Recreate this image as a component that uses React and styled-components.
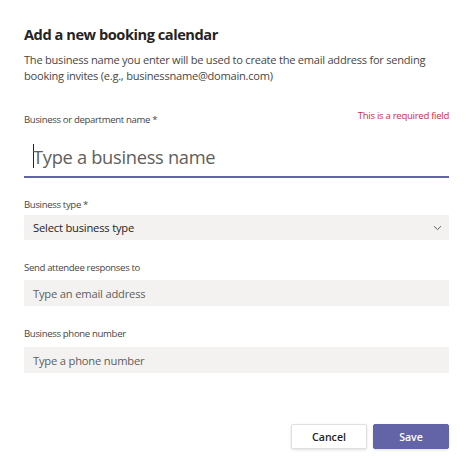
import React from 'react'
import styled, { createGlobalStyle } from 'styled-components'

const GlobalStyle = createGlobalStyle`
  html, body {
    margin: 0;
    padding: 0;
    background: #ffffff;
  }
  body {
    font-family: "Open Sans", "Noto Sans", sans-serif;
    color: #252423;
  }
`

const Dialog = styled.div`
  width: 474px;
  height: 475px;
  box-sizing: border-box;
  padding: 24px 25px 0 24px;
  display: flex;
  flex-direction: column;
`

const Title = styled.h1`
  margin: 0;
  font-size: 14.6px;
  line-height: 20px;
  font-weight: 700;
  color: #252423;
  letter-spacing: -0.45px;
`

const Description = styled.p`
  margin: 8px 0 0;
  font-size: 11.1px;
  line-height: 16px;
  color: #484644;
  letter-spacing: -0.25px;
`

const Field = styled.div`
  display: flex;
  flex-direction: column;
  margin-top: ${props => props.gap || 0}px;
`

const LabelRow = styled.div`
  display: flex;
  justify-content: space-between;
  align-items: flex-end;
  height: 14px;
`

const Label = styled.label`
  font-size: 9.6px;
  line-height: 14px;
  color: #484644;
  letter-spacing: -0.35px;
`

const ErrorText = styled.span`
  font-size: 9.6px;
  line-height: 14px;
  color: #c4314b;
  letter-spacing: -0.3px;
  position: relative;
  top: -4px;
`

const BigInput = styled.div`
  margin-top: 9px;
  height: 40px;
  border-bottom: 2px solid #6264a7;
  display: flex;
  align-items: center;
  padding-left: 9px;
`

const Caret = styled.span`
  width: 1px;
  height: 24px;
  background: #252423;
  margin-right: -1px;
`

const BigPlaceholder = styled.span`
  font-size: 18.3px;
  color: #605e5c;
  letter-spacing: -0.3px;
`

const Box = styled.div`
  margin-top: ${props => props.gap || 3}px;
  height: ${props => props.h || 26}px;
  background: #f3f2f1;
  display: flex;
  align-items: center;
  justify-content: space-between;
  padding: 0 7px 0 9px;
  font-size: 11.2px;
  color: ${props => (props.strong ? '#252423' : '#605e5c')};
  letter-spacing: -0.2px;
`

const Chevron = () => (
  <svg width="9" height="6" viewBox="0 0 9 6">
    <path d="M1 1.2 L4.5 4.6 L8 1.2" fill="none" stroke="#605e5c" strokeWidth="1" />
  </svg>
)

const Footer = styled.div`
  margin-top: auto;
  margin-bottom: 26px;
  display: flex;
  justify-content: flex-end;
  gap: 6px;
`

const Button = styled.button`
  width: 76px;
  height: 25px;
  border-radius: 2px;
  font-family: "Open Sans", "Noto Sans", sans-serif;
  font-size: 10.6px;
  font-weight: 600;
  cursor: pointer;
  border: 1px solid ${props => (props.primary ? '#6264a7' : '#e1dfdd')};
  background: ${props => (props.primary ? '#6264a7' : '#ffffff')};
  color: ${props => (props.primary ? '#ffffff' : '#252423')};
  box-shadow: 0 1px 3px rgba(0, 0, 0, 0.12);
`

export default function App() {
  return (
    <>
      <GlobalStyle />
      <Dialog>
        <Title>Add a new booking calendar</Title>
        <Description>
          The business name you enter will be used to create the email address for sending
          booking invites (e.g., businessname@domain.com)
        </Description>

        <Field gap={29}>
          <LabelRow>
            <Label>Business or department name *</Label>
            <ErrorText>This is a required field</ErrorText>
          </LabelRow>
          <BigInput>
            <Caret />
            <BigPlaceholder>Type a business name</BigPlaceholder>
          </BigInput>
        </Field>

        <Field gap={20}>
          <LabelRow>
            <Label>Business type *</Label>
          </LabelRow>
          <Box strong h={25}>
            <span>Select business type</span>
            <Chevron />
          </Box>
        </Field>

        <Field gap={21}>
          <LabelRow>
            <Label>Send attendee responses to</Label>
          </LabelRow>
          <Box gap={5}>Type an email address</Box>
        </Field>

        <Field gap={21}>
          <LabelRow>
            <Label>Business phone number</Label>
          </LabelRow>
          <Box gap={6}>Type a phone number</Box>
        </Field>

        <Footer>
          <Button>Cancel</Button>
          <Button primary>Save</Button>
        </Footer>
      </Dialog>
    </>
  )
}
